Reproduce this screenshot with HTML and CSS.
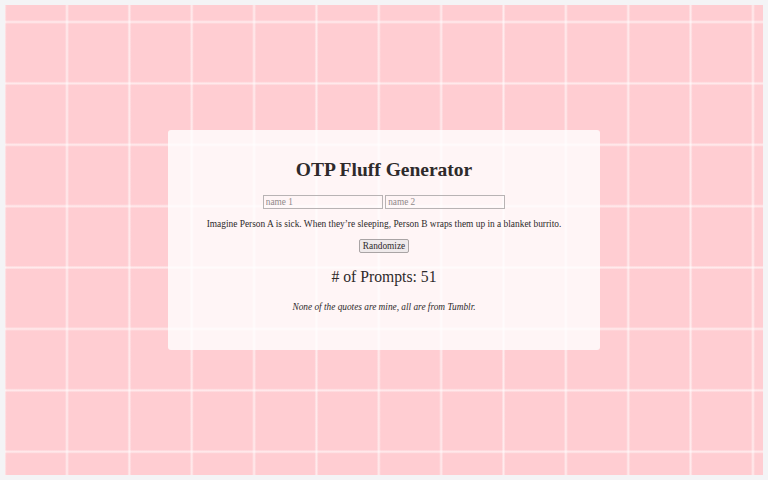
FILE: index.html
```html
<!DOCTYPE html>
<html lang="en">
<head>
    <meta charset="UTF-8">
    <meta name="viewport" content="width=device-width, initial-scale=1.0">
    <title>OTP Fluff Generator</title>
    <link rel="stylesheet" href="styles.css">
</head>
<body>

    <!-- kotak utama di tengah halaman -->
    <div class="box">
        <h1 class="title">OTP Fluff Generator</h1>

        <div class="names">
            <input type="text" id="name1" class="name-input" placeholder="name 1">
            <input type="text" id="name2" class="name-input" placeholder="name 2">
        </div>

        <p id="prompt" class="prompt">Imagine Person A is sick. When they’re sleeping, Person B wraps them up in a blanket burrito.</p>

        <button id="randomize" class="randomize">Randomize</button>

        <h2 class="count"># of Prompts: <span id="count">51</span></h2>

        <p class="credit"><em>None of the quotes are mine, all are from Tumblr.</em></p>
    </div>

</body>
</html>
```

FILE: styles.css
```css
html {
    background-color: #f4f4f6;
}
body {
    margin: 5px;
    min-height: calc(100vh - 10px);
    display: flex;
    align-items: center;
    justify-content: center;
    font-family: "Liberation Serif", "Times New Roman", serif;
    color: #2e2a2b;
    background-color: #ffcdd2;
    /* garis kotak-kotak putih seperti kertas */
    background-image:
        linear-gradient(90deg, rgba(255,255,255,0.2) 0, rgba(255,255,255,0.6) 1.5px, rgba(255,255,255,0.2) 3px, transparent 3.5px),
        linear-gradient(180deg, rgba(255,255,255,0.2) 0, rgba(255,255,255,0.6) 1.5px, rgba(255,255,255,0.2) 3px, transparent 3.5px);
    background-size: 62.36px 100%, 100% 61.4px;
    background-position: 60.5px 0, 0 15.5px;
}
.box {
    width: 432px;
    box-sizing: border-box;
    padding: 29px 20px 38px;
    background-color: rgba(255, 255, 255, 0.8);
    border-radius: 3px;
    text-align: center;
}
.title {
    font-size: 19.5px;
    margin: 0 0 14px;
}
.names {
    font-size: 9.3px;
    line-height: 1;
}
.name-input {
    width: 120px;
    height: 14px;
    box-sizing: border-box;
    padding: 0 2px;
    font-family: inherit;
    font-size: 9.3px;
    border: 1px solid #b8b3b4;
    background: transparent;
}
.name-input::placeholder {
    color: #8f8a8b;
}
.prompt {
    font-size: 9.4px;
    margin: 10px 0 6px;
}
.randomize {
    font-family: inherit;
    font-size: 9.3px;
    color: #2e2a2b;
    padding: 1px 3px;
    background-color: #efeaeb;
    border: 1px solid #a9a4a5;
    border-radius: 2px;
}
.count {
    font-size: 15.7px;
    font-weight: normal;
    margin: 15px 0 16px;
}
.credit {
    font-size: 9.3px;
    margin: 0;
}
```
